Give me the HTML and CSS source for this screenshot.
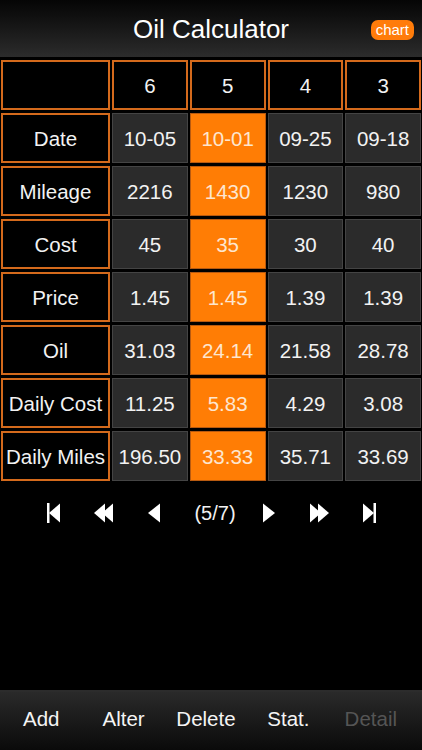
FILE: index.html
```html
<!DOCTYPE html>
<html>
<head>
<meta charset="utf-8">
<link rel="stylesheet" href="styles.css">
</head>
<body>
<div class="app">
  <header class="topbar">
    <h1 class="title">Oil Calculator</h1>
    <span class="chart-btn">chart</span>
  </header>

  <div class="grid">
    <div class="cell label"></div>
    <div class="cell label">6</div>
    <div class="cell label">5</div>
    <div class="cell label">4</div>
    <div class="cell label">3</div>

    <div class="cell label">Date</div>
    <div class="cell data">10-05</div>
    <div class="cell sel">10-01</div>
    <div class="cell data">09-25</div>
    <div class="cell data">09-18</div>

    <div class="cell label">Mileage</div>
    <div class="cell data">2216</div>
    <div class="cell sel">1430</div>
    <div class="cell data">1230</div>
    <div class="cell data">980</div>

    <div class="cell label">Cost</div>
    <div class="cell data">45</div>
    <div class="cell sel">35</div>
    <div class="cell data">30</div>
    <div class="cell data">40</div>

    <div class="cell label">Price</div>
    <div class="cell data">1.45</div>
    <div class="cell sel">1.45</div>
    <div class="cell data">1.39</div>
    <div class="cell data">1.39</div>

    <div class="cell label">Oil</div>
    <div class="cell data">31.03</div>
    <div class="cell sel">24.14</div>
    <div class="cell data">21.58</div>
    <div class="cell data">28.78</div>

    <div class="cell label">Daily Cost</div>
    <div class="cell data">11.25</div>
    <div class="cell sel">5.83</div>
    <div class="cell data">4.29</div>
    <div class="cell data">3.08</div>

    <div class="cell label">Daily Miles</div>
    <div class="cell data">196.50</div>
    <div class="cell sel">33.33</div>
    <div class="cell data">35.71</div>
    <div class="cell data">33.69</div>
  </div>

  <nav class="pager">
    <span class="pg-btn"><svg viewBox="0 0 20 20" width="20" height="20"><rect x="4" y="0" width="2.5" height="20" fill="#fff"/><polygon points="6,10 17,0.5 17,19.5" fill="#fff"/></svg></span>
    <span class="pg-btn"><svg viewBox="0 0 20 20" width="20" height="20"><polygon points="0,10 11,0.5 11,19.5" fill="#fff"/><polygon points="8,10 19,0.5 19,19.5" fill="#fff"/></svg></span>
    <span class="pg-btn"><svg viewBox="0 0 20 20" width="20" height="20"><polygon points="3,10 15,0.5 15,19.5" fill="#fff"/></svg></span>
    <span class="pg-text">(5/7)</span>
    <span class="pg-btn"><svg viewBox="0 0 20 20" width="20" height="20"><polygon points="17,10 5,0.5 5,19.5" fill="#fff"/></svg></span>
    <span class="pg-btn"><svg viewBox="0 0 20 20" width="20" height="20"><polygon points="12,10 1,0.5 1,19.5" fill="#fff"/><polygon points="20,10 9,0.5 9,19.5" fill="#fff"/></svg></span>
    <span class="pg-btn"><svg viewBox="0 0 20 20" width="20" height="20"><polygon points="14,10 3,0.5 3,19.5" fill="#fff"/><rect x="13.5" y="0" width="2.5" height="20" fill="#fff"/></svg></span>
  </nav>

  <div class="spacer"></div>

  <footer class="toolbar">
    <span class="tool">Add</span>
    <span class="tool">Alter</span>
    <span class="tool">Delete</span>
    <span class="tool">Stat.</span>
    <span class="tool disabled">Detail</span>
  </footer>
</div>
</body>
</html>
```

FILE: styles.css
```css
html, body {
  margin: 0;
  padding: 0;
  background: #000;
}

.app {
  width: 422px;
  height: 750px;
  display: flex;
  flex-direction: column;
  font-family: "Liberation Sans", Arial, sans-serif;
  color: #f2f2f2;
  background: #000;
}

.topbar {
  height: 57px;
  flex: none;
  display: flex;
  align-items: center;
  justify-content: center;
  position: relative;
  background: linear-gradient(to bottom, #050505 0%, #161616 45%, #2c2c2c 100%);
}

.title {
  margin: 0;
  font-weight: normal;
  font-size: 26px;
  color: #fff;
  line-height: 1;
}

.chart-btn {
  position: absolute;
  right: 8px;
  top: 20px;
  height: 20px;
  line-height: 20px;
  padding: 0 5px;
  border-radius: 7px;
  background: #ff7c0a;
  color: #fff;
  font-size: 15px;
}

.grid {
  margin-top: 3px;
  padding: 0 1px;
  display: grid;
  grid-template-columns: 109px repeat(4, 1fr);
  grid-auto-rows: 50px;
  column-gap: 2px;
  row-gap: 3px;
}

.cell {
  box-sizing: border-box;
  display: flex;
  align-items: center;
  justify-content: center;
  font-size: 20.5px;
  white-space: nowrap;
  padding-top: 1px;
}

.label {
  background: #000;
  border: 2px solid #d46a1c;
  color: #f2f2f2;
}

.data {
  background: #2b2b2b;
  border: 1.5px solid #444;
  color: #f2f2f2;
}

.sel {
  background: #ff7d05;
  border: 1.5px solid #b85a10;
  color: #fde6cf;
}

.pager {
  margin-top: 21px;
  height: 22px;
  display: flex;
  justify-content: center;
  align-items: center;
}

.pg-btn {
  width: 51px;
  display: flex;
  justify-content: center;
}

.pg-btn svg {
  display: block;
}

.pg-text {
  width: 62px;
  box-sizing: border-box;
  padding-left: 8px;
  text-align: center;
  font-size: 20px;
  color: #f2f2f2;
}

.spacer {
  flex: 1;
}

.toolbar {
  flex: none;
  height: 58px;
  border-top: 2px solid #2c2c2c;
  background: linear-gradient(to bottom, #2a2a2a 0%, #1a1a1a 50%, #0a0a0a 100%);
  display: grid;
  grid-template-columns: repeat(5, 1fr);
  align-items: center;
  padding-right: 10px;
  box-sizing: content-box;
}

.tool {
  text-align: center;
  font-size: 20.5px;
  color: #f4f4f4;
  padding-bottom: 4px;
}

.tool.disabled {
  color: #555;
}
```
